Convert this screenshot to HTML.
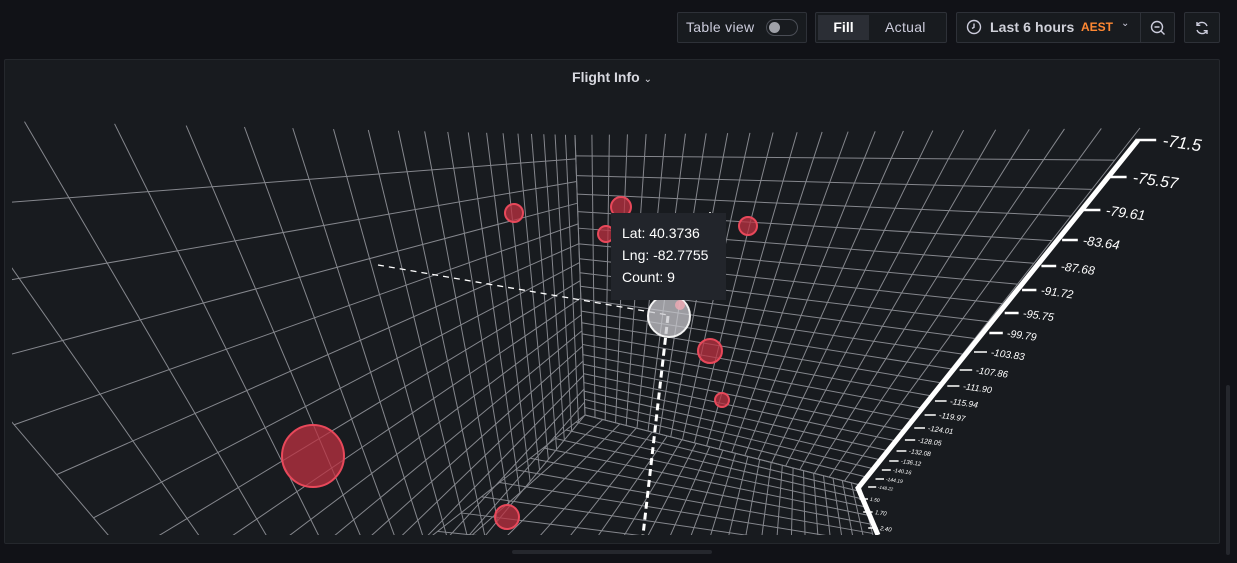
<!DOCTYPE html>
<html><head><meta charset="utf-8"><style>
*{margin:0;padding:0;box-sizing:border-box}
html,body{width:1237px;height:563px;overflow:hidden}
body{background:#111217;font-family:"Liberation Sans",sans-serif;color:#ccccdc;position:relative}
.box{position:absolute;top:12px;height:31px;border:1px solid #2e3138;border-radius:2px;background:#181b1f;font-size:14px;white-space:nowrap}
.panel{position:absolute;left:4px;top:59px;width:1216px;height:485px;background:#181b1f;border:1px solid #25282d;border-radius:2px;overflow:hidden}
.a{position:absolute}
</style></head><body>
<div class="box" style="left:677px;width:130px">
 <span class="a" style="left:8px;top:6px;letter-spacing:0.3px">Table view</span>
 <span class="a" style="left:88px;top:6px;width:32px;height:17px;border:1px solid #4a4d55;border-radius:9px"><span class="a" style="left:2px;top:2px;width:11px;height:11px;border-radius:50%;background:#9fa1a8"></span></span></div>
<div class="box" style="left:815px;width:132px">
 <span class="a" style="left:2px;top:2px;width:51px;height:25px;background:#2b2e35;text-align:center;line-height:25px;color:#fff;font-weight:bold">Fill</span>
 <span class="a" style="left:69px;top:6px;letter-spacing:0.3px">Actual</span></div>
<div class="box" style="left:956px;width:219px">
 <svg class="a" style="left:9px;top:6px" width="16" height="16" viewBox="0 0 16 16"><circle cx="8" cy="8" r="6.5" fill="none" stroke="#ccccdc" stroke-width="1.4"/><path d="M8 4.5V8.3L6 9.5" fill="none" stroke="#ccccdc" stroke-width="1.4"/></svg>
 <span class="a" style="left:33px;top:6px;font-weight:bold;color:#d0d1da;letter-spacing:0.1px">Last 6 hours</span>
 <span class="a" style="left:124px;top:7px;color:#ff8833;font-size:12px;font-weight:bold">AEST</span>
 <span class="a" style="left:164px;top:5px;font-size:10px">⌄</span>
 <span class="a" style="left:183px;top:0;height:29px;border-left:1px solid #2e3138;width:35px;display:flex;align-items:center;justify-content:center">
 <svg width="16" height="16" viewBox="0 0 16 16"><circle cx="7" cy="7" r="5.5" fill="none" stroke="#ccccdc" stroke-width="1.4"/><path d="M4.5 7h5M11 11l3.5 3.5" stroke="#ccccdc" stroke-width="1.4"/></svg></span></div>
<div class="box" style="left:1184px;width:36px;display:flex;align-items:center;justify-content:center">
 <svg width="16" height="16" viewBox="0 0 16 16" fill="none" stroke="#ccccdc" stroke-width="1.4"><path d="M13 6A5.5 5.5 0 0 0 3.2 5M3 10a5.5 5.5 0 0 0 9.8 1"/><path d="M3 2v3.3h3.3M13 14v-3.3H9.7"/></svg></div>
<div class="panel">
 <div style="position:absolute;left:0;width:100%;top:9px;text-align:center;font-size:14px;font-weight:bold;color:#d8d9e0">Flight Info <span style="font-size:10px;font-weight:normal">⌄</span></div>
</div>
<svg id="g" width="1237" height="563" style="position:absolute;left:0;top:0">
 <defs><clipPath id="c"><rect x="12" y="100" width="1200" height="435"/></clipPath></defs>
 <g id="grid" clip-path="url(#c)" stroke="#85878d" stroke-width="1" fill="none"></g>
 <g clip-path="url(#c)">
 <path d="M378 265L668 315" stroke="#fff" stroke-width="1.3" stroke-dasharray="6 5"/>
 <path d="M668 316L643 535" stroke="#fff" stroke-width="3" stroke-dasharray="7 4"/>
 <path d="M710 212v6" stroke="#fff" stroke-width="1.5"/>
 <g fill="rgba(190,50,65,0.75)" stroke="#e8485a" stroke-width="2">
 <circle cx="313" cy="456" r="31"/><circle cx="507" cy="517" r="12"/><circle cx="514" cy="213" r="9"/>
 <circle cx="621" cy="207" r="10"/><circle cx="606" cy="234" r="8"/><circle cx="748" cy="226" r="9"/>
 <circle cx="710" cy="351" r="12"/><circle cx="722" cy="400" r="7"/></g>
 <circle cx="669" cy="316" r="21" fill="rgba(200,200,205,0.75)" stroke="#f2f2f2" stroke-width="2"/>
 <circle cx="680" cy="305" r="5" fill="rgba(240,170,180,0.8)"/>
 <path d="M1138 140L858 488L878 535" stroke="#fff" stroke-width="5" fill="none"/>
 <g id="labels" fill="#fff" font-style="italic"></g>
 </g>
</svg>
<div style="position:absolute;left:611px;top:213px;width:115px;height:87px;background:#22252b;color:#fff;font-size:14px;line-height:22px;padding:9px 0 0 11px">Lat: 40.3736<br>Lng: -82.7755<br>Count: 9</div>
<div style="position:absolute;left:512px;top:550px;width:200px;height:4px;border-radius:2px;background:#25272d"></div>
<div style="position:absolute;left:1226px;top:385px;width:4px;height:170px;border-radius:2px;background:#25272d"></div>
<script>
function H(q){
 const [x0,y0]=q[0],[x1,y1]=q[1],[x2,y2]=q[2],[x3,y3]=q[3];
 const dx1=x1-x2,dx2=x3-x2,dy1=y1-y2,dy2=y3-y2,sx=x0-x1+x2-x3,sy=y0-y1+y2-y3;
 const den=dx1*dy2-dx2*dy1;const g=(sx*dy2-dx2*sy)/den,h=(dx1*sy-sx*dy1)/den;
 const a=x1-x0+g*x1,b=x3-x0+h*x3,d=y1-y0+g*y1,e=y3-y0+h*y3;
 return (u,v)=>{const w=g*u+h*v+1;return [(a*u+b*v+x0)/w,(d*u+e*v+y0)/w]};}
let s="";
function grid(q,nu,nv,skipTop){const f=H(q);
 for(let i=0;i<=nu;i++){const u=i/nu,A=f(u,0),B=f(u,1);s+=`<line x1="${A[0]}" y1="${A[1]}" x2="${B[0]}" y2="${B[1]}"/>`;}
 for(let j=skipTop?1:0;j<=nv;j++){const v=j/nv,A=f(0,v),B=f(1,v);s+=`<line x1="${A[0]}" y1="${A[1]}" x2="${B[0]}" y2="${B[1]}"/>`;}}
grid([[-250,115],[575,135],[585,415],[300,760]],20,16,true);
grid([[575,135],[1140,128],[860,485],[585,415]],22,22,true);
grid([[585,415],[860,485],[900,640],[300,640]],22,14,false);
document.getElementById('grid').innerHTML=s;
const L=[["-71.5",1163,140,17],["-75.57",1133,177,16],["-79.61",1106,210,14],["-83.64",1083,240,13],["-87.68",1061,266,12],["-91.72",1041,290,11.5],["-95.75",1023,313,11],["-99.79",1007,333,10.5],["-103.83",991,352,10],["-107.86",976,370,9.5],["-111.90",963,386,9],["-115.94",950,401,8.5],["-119.97",939,415,8],["-124.01",928,428,7.5],["-128.05",918,440,7],["-132.08",909,451,6.5],["-136.12",901,461,6],["-140.16",893,470,5.5],["-144.19",886,479,5],["-148.22",878,487,4.5],["1.50",870,499,5],["1.70",875,512,6],["2.40",880,528,6]];
let t="",k="";
L.forEach(([tx,x,y,fs])=>{t+=`<text x="${x}" y="${y+fs*0.35}" font-size="${fs}" transform="rotate(8 ${x} ${y})">${tx}</text>`;
 k+=`<path d="M${x-fs*1.3-4} ${y}h${fs*0.9+4}" stroke="#fff" stroke-width="${fs>10?2.5:1.5}"/>`;});
document.getElementById('labels').innerHTML=t+k;
</script>
</body></html>
